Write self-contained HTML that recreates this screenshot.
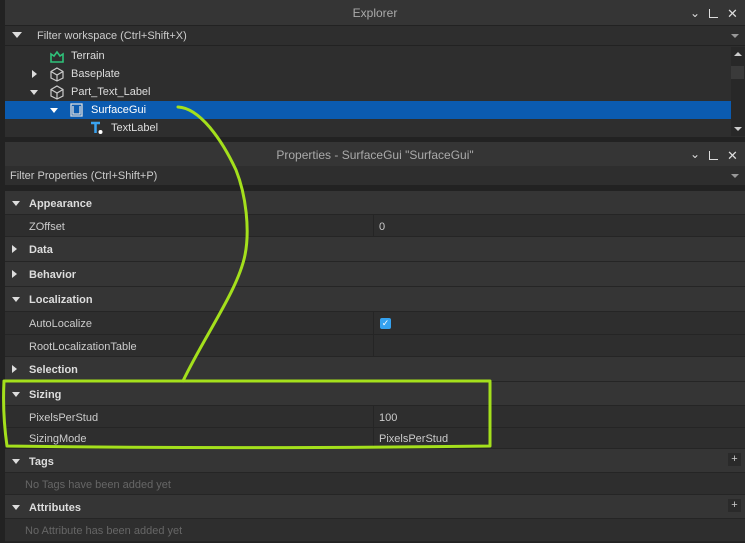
<!DOCTYPE html>
<html><head><meta charset="utf-8"><style>
*{margin:0;padding:0;box-sizing:border-box}
body{width:745px;height:542px;background:#222;font-family:"Liberation Sans",sans-serif;font-size:11px;color:#ccc;position:relative;overflow:hidden}
.a{position:absolute}
.title{background:#353535;color:#aaa;font-size:12px;text-align:center;line-height:27px}
.cat{position:absolute;left:5px;width:740px;background:#353535;border-bottom:1px solid #252525;color:#ddd;font-weight:bold;padding-left:24px;padding-top:1px}
.prop{position:absolute;left:5px;width:740px;background:#2e2e2e;border-bottom:1px solid #252525;color:#ccc;padding-left:24px;padding-top:1px}
.prop .v{position:absolute;left:368px;top:0;bottom:0;border-left:1px solid #252525;padding-left:5px;padding-top:1px}
.tri{position:absolute;left:7px;width:0;height:0}
.down{border-left:4px solid transparent;border-right:4px solid transparent;border-top:5px solid #ddd}
.right{border-top:4px solid transparent;border-bottom:4px solid transparent;border-left:5px solid #ddd}
.tr{position:absolute;color:#ddd;font-size:11px}
</style></head><body>
<!-- Explorer -->
<div class="a title" style="left:5px;top:0;width:740px;height:25px">Explorer</div>
<div class="a" style="left:690px;top:6px;color:#ddd;font-size:12px">&#8964;</div>
<div class="a" style="left:709px;top:9px;width:9px;height:9px;border:1px solid #ddd;border-right:none;border-top:none"></div>
<div class="a" style="left:727px;top:6px;color:#ddd;font-size:13px">&#10005;</div>
<div class="a" style="left:5px;top:26px;width:740px;height:19px;background:#2e2e2e;line-height:21px;padding-left:32px;color:#ccc">Filter workspace (Ctrl+Shift+X)</div>
<div class="a" style="left:12px;top:32px;border-left:5px solid transparent;border-right:5px solid transparent;border-top:6px solid #ddd"></div>
<div class="a" style="left:731px;top:34px;border-left:4px solid transparent;border-right:4px solid transparent;border-top:4px solid #999"></div>
<div class="a" style="left:5px;top:46px;width:740px;height:91px;background:#2e2e2e"></div>
<div class="a" style="left:731px;top:47px;width:14px;height:89px;background:#282828"></div>
<div class="a" style="left:731px;top:66px;width:13px;height:13px;background:#3a3a3a"></div>
<div class="a" style="left:734px;top:52px;border-left:4px solid transparent;border-right:4px solid transparent;border-bottom:4px solid #ccc"></div>
<div class="a" style="left:734px;top:127px;border-left:4px solid transparent;border-right:4px solid transparent;border-top:4px solid #ccc"></div>
<svg class="a" style="left:50px;top:50px" width="14" height="13"><path d="M1 12V4l3 2 3-4 3 4 3-2v8z" fill="none" stroke="#2fc27a" stroke-width="1.6"/></svg>
<div class="tr" style="left:71px;top:50px">Terrain</div>
<div class="a" style="left:32px;top:70px;border-top:4px solid transparent;border-bottom:4px solid transparent;border-left:5px solid #ddd"></div>
<svg class="a" style="left:50px;top:67px" width="14" height="15"><path d="M7 1L13 4.5V11L7 14 1 11V4.5zM1 4.5L7 8 13 4.5M7 8V14" fill="none" stroke="#ccc" stroke-width="1.2"/></svg>
<div class="tr" style="left:71px;top:68px">Baseplate</div>
<div class="a down" style="left:30px;top:90px"></div>
<svg class="a" style="left:50px;top:85px" width="14" height="15"><path d="M7 1L13 4.5V11L7 14 1 11V4.5zM1 4.5L7 8 13 4.5M7 8V14" fill="none" stroke="#ccc" stroke-width="1.2"/></svg>
<div class="tr" style="left:71px;top:86px">Part_Text_Label</div>
<div class="a" style="left:5px;top:101px;width:726px;height:18px;background:#0b5bb0"></div>
<div class="a down" style="left:50px;top:108px;border-top-color:#fff"></div>
<svg class="a" style="left:70px;top:103px" width="13" height="14"><path d="M1 1h11v12H1zM3 3v8h7V3" fill="none" stroke="#ddd" stroke-width="1.3"/></svg>
<div class="tr" style="left:91px;top:104px;color:#fff">SurfaceGui</div>
<svg class="a" style="left:90px;top:121px" width="14" height="14"><path d="M1 2h9M5.5 2v10" stroke="#3aa3f0" stroke-width="2.5"/><circle cx="10.5" cy="11" r="2" fill="#fff"/></svg>
<div class="tr" style="left:111px;top:122px">TextLabel</div>
<!-- Properties -->
<div class="a title" style="left:5px;top:142px;width:740px;height:24px;line-height:26px">Properties - SurfaceGui "SurfaceGui"</div>
<div class="a" style="left:690px;top:147px;color:#ddd;font-size:12px">&#8964;</div>
<div class="a" style="left:709px;top:151px;width:9px;height:9px;border:1px solid #ddd;border-right:none;border-top:none"></div>
<div class="a" style="left:727px;top:148px;color:#ddd;font-size:13px">&#10005;</div>
<div class="a" style="left:5px;top:166px;width:740px;height:19px;background:#2e2e2e;line-height:21px;padding-left:5px">Filter Properties (Ctrl+Shift+P)</div>
<div class="a" style="left:731px;top:174px;border-left:4px solid transparent;border-right:4px solid transparent;border-top:4px solid #999"></div>

<div class="cat" style="top:191px;height:24px;line-height:24px"><span class="tri down" style="top:10px"></span>Appearance</div>
<div class="prop" style="top:215px;height:22px;line-height:22px">ZOffset<span class="v">0</span></div>
<div class="cat" style="top:237px;height:25px;line-height:25px"><span class="tri right" style="top:8px"></span>Data</div>
<div class="cat" style="top:262px;height:25px;line-height:25px"><span class="tri right" style="top:8px"></span>Behavior</div>
<div class="cat" style="top:287px;height:25px;line-height:25px"><span class="tri down" style="top:10px"></span>Localization</div>
<div class="prop" style="top:312px;height:23px;line-height:23px">AutoLocalize<span class="v"><span class="a" style="left:6px;top:6px;width:11px;height:11px;background:#35a2f0;border-radius:2px;color:#fff;font-size:9px;line-height:11px;text-align:center">&#10003;</span></span></div>
<div class="prop" style="top:335px;height:22px;line-height:22px">RootLocalizationTable<span class="v"></span></div>
<div class="cat" style="top:357px;height:25px;line-height:25px"><span class="tri right" style="top:8px"></span>Selection</div>
<div class="cat" style="top:382px;height:24px;line-height:24px"><span class="tri down" style="top:10px"></span>Sizing</div>
<div class="prop" style="top:406px;height:22px;line-height:22px">PixelsPerStud<span class="v">100</span></div>
<div class="prop" style="top:428px;height:21px;line-height:21px">SizingMode<span class="v">PixelsPerStud</span></div>
<div class="cat" style="top:449px;height:24px;line-height:24px"><span class="tri down" style="top:10px"></span>Tags<span class="a" style="right:4px;top:4px;width:13px;height:13px;background:#2a2a2a;color:#ccc;line-height:13px;text-align:center;font-weight:normal">+</span></div>
<div class="prop" style="top:473px;height:22px;line-height:22px;padding-left:20px;color:#666">No Tags have been added yet</div>
<div class="cat" style="top:495px;height:24px;line-height:24px"><span class="tri down" style="top:10px"></span>Attributes<span class="a" style="right:4px;top:4px;width:13px;height:13px;background:#2a2a2a;color:#ccc;line-height:13px;text-align:center;font-weight:normal">+</span></div>
<div class="prop" style="top:519px;height:23px;line-height:23px;padding-left:20px;color:#666">No Attribute has been added yet</div>

<svg class="a" style="left:0;top:0" width="745" height="542">
<path d="M178 107C200 108 222 140 236 170C246 195 250 230 245 255C238 290 205 335 183 381" fill="none" stroke="#a4e01c" stroke-width="3" stroke-linecap="round"/>
<path d="M4 381H490V446C330 448 150 448 7 446C4 425 3 400 4 381" fill="none" stroke="#a4e01c" stroke-width="3" stroke-linecap="round" stroke-linejoin="round"/>
</svg>
</body></html>
